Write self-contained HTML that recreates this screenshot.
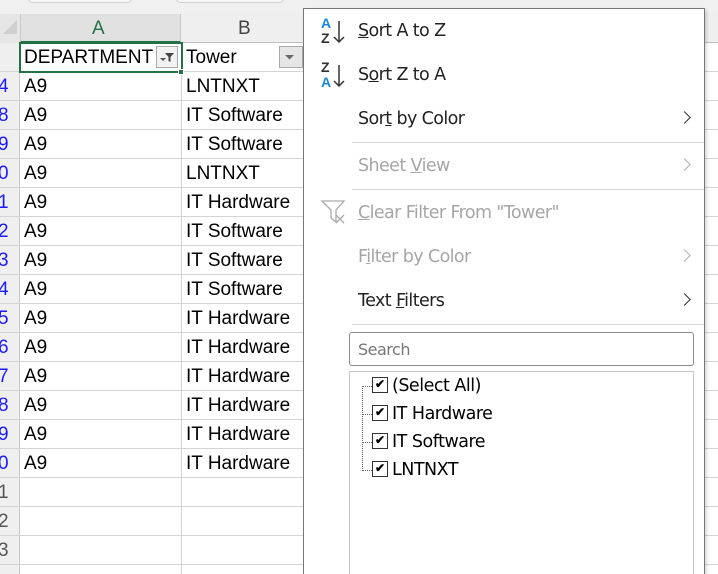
<!DOCTYPE html>
<html style="overflow:hidden;height:574px"><head><style>
*{margin:0;padding:0;box-sizing:border-box}
body{width:718px;height:574px;overflow:hidden;background:#fff;position:relative;font-family:"Liberation Sans",sans-serif}
.a{position:absolute}
.t{position:absolute;font-size:19px;color:#000;white-space:nowrap}
.m{position:absolute;left:358px;font-size:17.5px;color:#222;white-space:nowrap;font-family:"DejaVu Sans","Liberation Sans",sans-serif;letter-spacing:-0.6px}
.g{color:#a6a6a6}
.hl{position:absolute;height:1px;background:#d4d4d4}
.sep{position:absolute;left:352px;width:352px;height:1px;background:#d7d7d7}
.chev{position:absolute;left:680px;width:9px;height:9px;border-right:1.5px solid #333;border-top:1.5px solid #333;transform:rotate(45deg)}
.cb{position:absolute;left:372px;width:16px;height:16px;border:1px solid #333;background:#fff;font-size:12px;line-height:13px;text-align:center;font-weight:bold}
.li{position:absolute;left:392px;font-size:17.5px;color:#000;font-family:"DejaVu Sans",sans-serif;letter-spacing:-0.5px}
</style></head><body>
<div class="a" style="left:0;top:0;width:718px;height:14px;background:#f0f0f0"></div>
<div class="a" style="left:28px;top:-6px;width:104px;height:9px;border:1px solid #d0d0d0;border-radius:5px;background:#f6f6f6"></div>
<div class="a" style="left:176px;top:-6px;width:108px;height:9px;border:1px solid #d0d0d0;border-radius:5px;background:#f6f6f6"></div>
<div class="a" style="left:0;top:14px;width:718px;height:29px;background:#efefef;border-bottom:1px solid #bdbdbd"></div>
<div class="a" style="left:0;top:14px;width:20px;height:29px;background:#e6e6e6"></div>
<div class="a" style="left:3px;top:20px;width:0;height:0;border-left:14px solid transparent;border-bottom:14px solid #d0d0d0"></div>
<div class="a" style="left:20px;top:14px;width:161px;height:29px;background:#e1e1e1;border-left:1px solid #c8c8c8;border-right:1px solid #c8c8c8;border-bottom:2px solid #217346"></div>
<div class="t" style="left:92px;top:18px;color:#217346">A</div>
<div class="t" style="left:238px;top:18px;color:#444">B</div>
<div class="a" style="left:0;top:43px;width:20px;height:531px;background:#efefef;border-right:1px solid #c8c8c8"></div>
<div id="grid"></div>
<div class="a" style="left:19px;top:42px;width:164px;height:31px;border:2px solid #217346"></div>
<div class="a" style="left:178px;top:69px;width:6px;height:6px;background:#217346;border:1px solid #fff"></div>
<div class="t" style="left:24px;top:47px">DEPARTMENT</div>
<div class="a" style="left:156px;top:46px;width:22px;height:22px;background:#f2f2f2;border:1px solid #aaa"></div>
<svg class="a" style="left:157px;top:47px" width="20" height="20"><path d="M3 11l3 3 3-3z" fill="#555"/><path d="M8 6h9l-3.5 4v5l-2-1v-4z" fill="#444"/></svg>
<div class="t" style="left:186px;top:47px">Tower</div>
<div class="a" style="left:279px;top:46px;width:24px;height:22px;background:#e6e6e6;border:1px solid #aaa"></div>
<svg class="a" style="left:284px;top:54px" width="12" height="8"><path d="M1 1h9l-4.5 4.5z" fill="#666"/></svg>
<div class="a" style="left:303px;top:8px;width:402px;height:566px;background:#fff;border:1px solid #777;border-bottom:none;box-shadow:2px 2px 3px rgba(0,0,0,.15)"></div>
<svg class="a" style="left:318px;top:16px" width="32" height="30" font-family="Liberation Sans" font-size="14" font-weight="bold"><text x="3" y="12" fill="#1e88d8">A</text><text x="3" y="27" fill="#333">Z</text><path d="M21 5v21M16 21l5 5 5-5" stroke="#333" stroke-width="1.5" fill="none"/></svg>
<div class="m" style="top:21px"><u>S</u>ort A to Z</div>
<svg class="a" style="left:318px;top:60px" width="32" height="30" font-family="Liberation Sans" font-size="14" font-weight="bold"><text x="3" y="12" fill="#333">Z</text><text x="3" y="27" fill="#1e88d8">A</text><path d="M21 5v21M16 21l5 5 5-5" stroke="#333" stroke-width="1.5" fill="none"/></svg>
<div class="m" style="top:65px">S<u>o</u>rt Z to A</div>
<div class="m" style="top:109px">Sor<u>t</u> by Color</div>
<div class="chev" style="top:113px"></div>
<div class="sep" style="top:142px"></div>
<div class="m g" style="top:156px">Sheet <u>V</u>iew</div>
<div class="chev" style="top:160px;border-color:#b0b0b0"></div>
<div class="sep" style="top:189px"></div>
<svg class="a" style="left:320px;top:199px" width="28" height="26"><path d="M2 2h22l-8 9v12l-5-4v-8z" fill="none" stroke="#aaa" stroke-width="1.3"/><path d="M16 16l8 8M24 16l-8 8" stroke="#aaa" stroke-width="1.3"/></svg>
<div class="m g" style="top:203px"><u>C</u>lear Filter From "Tower"</div>
<div class="m g" style="top:247px">F<u>i</u>lter by Color</div>
<div class="chev" style="top:251px;border-color:#b0b0b0"></div>
<div class="m" style="top:291px">Text <u>F</u>ilters</div>
<div class="chev" style="top:295px"></div>
<div class="sep" style="top:324px"></div>
<div class="a" style="left:349px;top:332px;width:345px;height:34px;border:1px solid #8a8a8a;border-radius:3px"></div>
<div class="a" style="left:358px;top:340px;font-size:16px;color:#777;font-family:'DejaVu Sans',sans-serif;letter-spacing:-0.5px">Search</div>
<div class="a" style="left:349px;top:371px;width:345px;height:210px;border:1px solid #c8c8c8"></div>
<div class="a" style="left:362px;top:386px;width:1px;height:85px;border-left:1px dotted #666"></div>
<div class="a" style="left:362px;top:386px;width:10px;border-top:1px dotted #666"></div>
<div class="a" style="left:362px;top:414px;width:10px;border-top:1px dotted #666"></div>
<div class="a" style="left:362px;top:442px;width:10px;border-top:1px dotted #666"></div>
<div class="a" style="left:362px;top:470px;width:10px;border-top:1px dotted #666"></div>
<div class="cb" style="top:377px">✔</div><div class="li" style="top:376px">(Select All)</div>
<div class="cb" style="top:405px">✔</div><div class="li" style="top:404px">IT Hardware</div>
<div class="cb" style="top:433px">✔</div><div class="li" style="top:432px">IT Software</div>
<div class="cb" style="top:461px">✔</div><div class="li" style="top:460px">LNTNXT</div>
<script>
var g=document.getElementById('grid'),h='';
var nums=['4','8','9','0','1','2','3','4','5','6','7','8','9','0','1','2','3'];
var tw=['LNTNXT','IT Software','IT Software','LNTNXT','IT Hardware','IT Software','IT Software','IT Software','IT Hardware','IT Hardware','IT Hardware','IT Hardware','IT Hardware','IT Hardware'];
for(var i=0;i<17;i++){var y=72+29*i;
h+='<div class="hl" style="left:0;width:718px;top:'+(y+28)+'px"></div>';
h+='<div class="t" style="left:0;top:'+(y+4)+'px;color:'+(i<14?'#1a1aff':'#555')+';width:12px;overflow:hidden;text-indent:-2px">'+nums[i]+'</div>';
if(i<14){h+='<div class="t" style="left:24px;top:'+(y+4)+'px">A9</div><div class="t" style="left:186px;top:'+(y+4)+'px">'+tw[i]+'</div>';}}
h+='<div class="hl" style="left:0;width:718px;top:71px"></div>';
h+='<div class="a" style="left:181px;top:43px;width:1px;height:531px;background:#d4d4d4"></div>';
g.innerHTML=h;
</script>
</body></html>
